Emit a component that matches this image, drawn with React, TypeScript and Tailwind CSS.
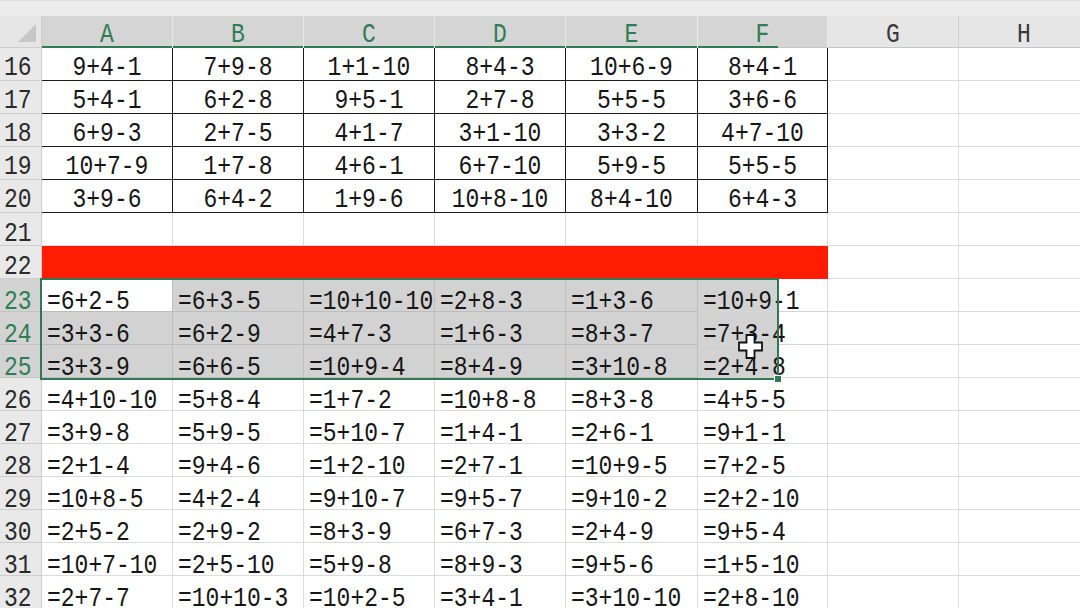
import React from "react";

const W = [
  "w-[131px]",
  "w-[131px]",
  "w-[131px]",
  "w-[131px]",
  "w-[132px]",
  "w-[130px]",
  "w-[131px]",
  "w-[131px]",
];
const LETTERS = ["A", "B", "C", "D", "E", "F", "G", "H"];

const TOP: string[][] = [
  ["9+4-1", "7+9-8", "1+1-10", "8+4-3", "10+6-9", "8+4-1"],
  ["5+4-1", "6+2-8", "9+5-1", "2+7-8", "5+5-5", "3+6-6"],
  ["6+9-3", "2+7-5", "4+1-7", "3+1-10", "3+3-2", "4+7-10"],
  ["10+7-9", "1+7-8", "4+6-1", "6+7-10", "5+9-5", "5+5-5"],
  ["3+9-6", "6+4-2", "1+9-6", "10+8-10", "8+4-10", "6+4-3"],
];

const BOTTOM: string[][] = [
  ["=6+2-5", "=6+3-5", "=10+10-10", "=2+8-3", "=1+3-6", "=10+9-1"],
  ["=3+3-6", "=6+2-9", "=4+7-3", "=1+6-3", "=8+3-7", "=7+3-4"],
  ["=3+3-9", "=6+6-5", "=10+9-4", "=8+4-9", "=3+10-8", "=2+4-8"],
  ["=4+10-10", "=5+8-4", "=1+7-2", "=10+8-8", "=8+3-8", "=4+5-5"],
  ["=3+9-8", "=5+9-5", "=5+10-7", "=1+4-1", "=2+6-1", "=9+1-1"],
  ["=2+1-4", "=9+4-6", "=1+2-10", "=2+7-1", "=10+9-5", "=7+2-5"],
  ["=10+8-5", "=4+2-4", "=9+10-7", "=9+5-7", "=9+10-2", "=2+2-10"],
  ["=2+5-2", "=2+9-2", "=8+3-9", "=6+7-3", "=2+4-9", "=9+5-4"],
  ["=10+7-10", "=2+5-10", "=5+9-8", "=8+9-3", "=9+5-6", "=1+5-10"],
  ["=2+7-7", "=10+10-3", "=10+2-5", "=3+4-1", "=3+10-10", "=2+8-10"],
];

function Txt({ children }: { children: React.ReactNode }) {
  return <span className="inline-block scale-y-[1.18]">{children}</span>;
}

function cellClass(r: number, c: number): string {
  const base =
    "h-[33px] shrink-0 border-r border-b whitespace-nowrap leading-[22px] text-[#161616]";
  if (c >= 6) return `${base} bg-white border-[#dcdcdc]`;
  if (r <= 20) return `${base} pt-[9px] text-center bg-white border-[#1c1c1c]`;
  if (r === 21) return `${base} bg-white border-[#dcdcdc]`;
  if (r === 22) return `${base} bg-[#ff1c00] border-[#ff1c00]`;
  if (r <= 25) {
    if (r === 23 && c === 0) return `${base} pt-[12px] pl-[5px] bg-white border-[#bdbdbd]`;
    if (c === 5)
      return `${base} pt-[12px] pl-[5px] bg-[linear-gradient(to_right,#d2d2d2_80px,#ffffff_80px)] border-[#d6d6d6]`;
    return `${base} pt-[12px] pl-[5px] bg-[#d2d2d2] border-[#bdbdbd]`;
  }
  return `${base} pt-[12px] pl-[5px] bg-white border-[#dcdcdc]`;
}

function rowHeaderClass(r: number): string {
  const base =
    "w-[42px] h-[33px] shrink-0 border-r border-b pl-[4px] whitespace-nowrap leading-[22px]";
  const sel = r >= 23 && r <= 25;
  const color = sel
    ? "bg-[#d3d3d3] text-[#2f7d55] border-[#c4c4c4]"
    : "bg-[#e9e9e9] text-[#2a2a2a] border-[#cdcdcd]";
  const pad = r <= 20 ? "pt-[9px]" : r <= 22 ? "pt-[10px]" : "pt-[12px]";
  return `${base} ${color} ${pad}`;
}

function cellText(r: number, c: number): string {
  if (c >= 6) return "";
  if (r >= 16 && r <= 20) return TOP[r - 16][c];
  if (r >= 23) return BOTTOM[r - 23][c];
  return "";
}

export default function App() {
  const rows: number[] = [];
  for (let r = 16; r <= 32; r++) rows.push(r);

  return (
    <div
      className="relative w-[1080px] h-[608px] overflow-hidden bg-white text-[23px]"
      style={{ fontFamily: '"Liberation Mono", "DejaVu Sans Mono", monospace' }}
    >
      {/* top strip */}
      <div className="h-[16px] bg-[#ececec] border-t border-[#dedede]" />

      {/* column header */}
      <div className="flex h-[32px]">
        <div className="w-[42px] shrink-0 bg-[#e6e6e6] border-r border-b border-[#cdcdcd] flex items-end justify-end pr-[5px] pb-[5px]">
          <svg width="18" height="18" viewBox="0 0 18 18">
            <polygon points="18,0 18,18 0,18" fill="#c6c6c6" />
          </svg>
        </div>
        {LETTERS.map((L, i) => {
          const sel = i < 6;
          return (
            <div
              key={L}
              className={`${W[i]} shrink-0 flex flex-col border-r ${
                sel ? "bg-[#d5d5d5] border-[#e8e8e8]" : "bg-[#e6e6e6] border-[#d0d0d0]"
              }`}
            >
              <div
                className={`flex-1 flex items-center justify-center pt-[7px] leading-[20px] ${
                  sel ? "text-[#2f7d55]" : "text-[#3a3a3a]"
                }`}
              >
                <Txt>{L}</Txt>
              </div>
              {i < 5 && <div className="h-[2px] bg-[#2f7d55]" />}
              {i === 5 && (
                <div className="h-[2px] flex">
                  <div className="w-[80px] bg-[#2f7d55]" />
                  <div className="flex-1 border-b border-[#c6c6c6]" />
                </div>
              )}
              {i > 5 && <div className="h-[1px] bg-[#c6c6c6]" />}
            </div>
          );
        })}
      </div>

      {/* rows */}
      {rows.map((r) => (
        <div key={r} className="flex">
          <div className={rowHeaderClass(r)}>
            <Txt>{r}</Txt>
          </div>
          {W.map((w, c) => (
            <div key={c} className={`${w} ${cellClass(r, c)}`}>
              {cellText(r, c) && <Txt>{cellText(r, c)}</Txt>}
            </div>
          ))}
        </div>
      ))}

      {/* selection outline */}
      <div className="absolute left-[40px] top-[278px] w-[739px] h-[102px] border-2 border-[#2f7a55] pointer-events-none" />
      {/* fill handle */}
      <div className="absolute left-[774px] top-[375px] w-[8px] h-[8px] bg-[#2f7a55] border border-white" />

      {/* cursor */}
      <svg
        className="absolute left-[738px] top-[334px]"
        width="25"
        height="25"
        viewBox="0 0 25 25"
      >
        <path
          d="M8.5 1 H16.5 V8.5 H24 V16.5 H16.5 V24 H8.5 V16.5 H1 V8.5 H8.5 Z"
          fill="#ffffff"
          stroke="#111111"
          strokeWidth="1.8"
          strokeLinejoin="miter"
        />
      </svg>
    </div>
  );
}
